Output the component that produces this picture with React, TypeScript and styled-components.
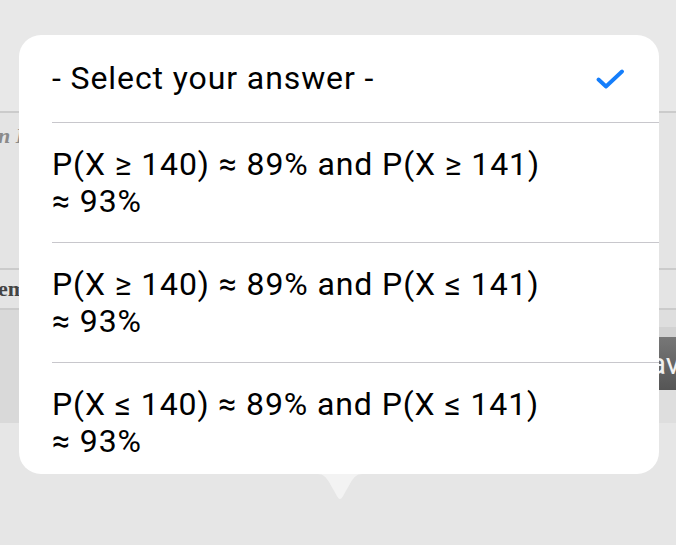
import React from "react";
import styled, { createGlobalStyle } from "styled-components";

const GlobalStyle = createGlobalStyle`
  html, body {
    margin: 0;
    padding: 0;
    background: #e6e6e6;
  }
  body {
    font-family: "Liberation Serif", serif;
  }
`;

const Screen = styled.div`
  position: relative;
  width: 676px;
  height: 545px;
  overflow: hidden;
  display: flex;
  flex-direction: column;
  background: #e6e6e6;
`;

const TopBand = styled.div`
  height: 111px;
  background: #e8e8e8;
  border-bottom: 2px solid #cbcbcb;
`;

const FormRow = styled.div<{ $height: number }>`
  height: ${(p) => p.$height}px;
  display: flex;
  align-items: flex-start;
  border-bottom: 2px solid #cbcbcb;
  background: #e4e4e4;
  overflow: hidden;
`;

const Fragment = styled.span<{ $italic?: boolean }>`
  font-family: "Liberation Serif", serif;
  font-size: 22px;
  color: #8a8a8a;
  white-space: nowrap;
  font-style: ${(p) => (p.$italic ? "italic" : "normal")};
  font-weight: bold;
  margin-left: -2px;
`;

const Footer = styled.div`
  height: 113px;
  display: flex;
  justify-content: space-between;
  align-items: flex-start;
  background: linear-gradient(to right, #d9d9d9 0 50%, #dedede 50% 100%);
`;

const SaveButton = styled.div`
  margin-top: 17px;
  margin-right: -40px;
  height: 53px;
  padding: 0 20px;
  display: flex;
  align-items: center;
  background: linear-gradient(#777, #555);
  color: #f0f0f0;
  font-family: "Roboto", sans-serif;
  font-size: 30px;
  border-top: 10px solid #d2d2d2;
`;

const Popover = styled.div`
  position: absolute;
  left: 19px;
  top: 35px;
  width: 640px;
  height: 439px;
  border-radius: 22px;
  background: #ffffff;
  overflow: hidden;
`;

const Option = styled.div<{ $single?: boolean }>`
  display: flex;
  align-items: center;
  justify-content: space-between;
  margin-left: 33px;
  padding: ${(p) => (p.$single ? "25px 35px 25px 0" : "23px 35px 22px 0")};
  border-bottom: 1px solid #c8c7cc;
  font-family: "Roboto", "Inter", sans-serif;
  font-size: 32px;
  line-height: 37px;
  color: #000;
  letter-spacing: 0.9px;
`;

const OptionText = styled.span`
  max-width: 496px;
`;

const Arrow = styled.svg`
  position: absolute;
  left: 318px;
  top: 474px;
`;

const options = [
  "P(X ≥ 140) ≈ 89% and P(X ≥ 141) ≈ 93%",
  "P(X ≥ 140) ≈ 89% and P(X ≤ 141) ≈ 93%",
  "P(X ≤ 140) ≈ 89% and P(X ≤ 141) ≈ 93%",
];

const Check = () => (
  <svg width="28" height="20" viewBox="0 0 28 20">
    <polyline
      points="2.5,10.5 10,17.5 26,2.5"
      fill="none"
      stroke="#157efb"
      strokeWidth="3.8"
      strokeLinecap="round"
      strokeLinejoin="round"
    />
  </svg>
);

export default function App() {
  return (
    <>
      <GlobalStyle />
      <Screen>
        <TopBand />
        <FormRow $height={155}>
          <Fragment $italic style={{ marginTop: 10 }}>
            n I
          </Fragment>
        </FormRow>
        <FormRow $height={38}>
          <Fragment style={{ marginTop: 6, color: "#444" }}>em</Fragment>
        </FormRow>
        <Footer>
          <span />
          <SaveButton>Save</SaveButton>
        </Footer>
        <Popover>
          <Option $single>
            <OptionText>- Select your answer -</OptionText>
            <Check />
          </Option>
          {options.map((o) => (
            <Option key={o}>
              <OptionText>{o}</OptionText>
            </Option>
          ))}
        </Popover>
        <Arrow width="44" height="28" viewBox="0 0 44 28">
          <path
            d="M0 0 H44 C39 0 36 3 33 8 L24.5 23 Q22 27 19.5 23 L11 8 C8 3 5 0 0 0 Z"
            fill="#f3f3f3"
          />
        </Arrow>
      </Screen>
    </>
  );
}
